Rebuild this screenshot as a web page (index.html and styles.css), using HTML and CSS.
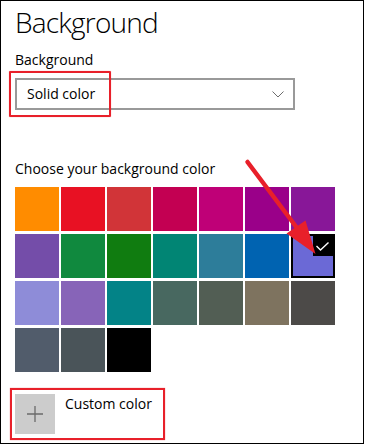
FILE: index.html
```html
<!DOCTYPE html>
<html lang="en">
<head>
  <meta charset="UTF-8" />
  <meta name="viewport" content="width=device-width, initial-scale=1.0" />
  <title>Background</title>
  <link rel="stylesheet" href="styles.css">
</head>
<body>
  <div class="frame">
    <h1 class="title">Background</h1>
    <div class="label">Background</div>
    <div class="select">
      <span>Solid color</span>
      <svg class="chevron" width="12" height="7" viewBox="0 0 12 7">
        <path d="M0.5 0.5 L6 6 L11.5 0.5" fill="none" stroke="#6d6d6d" stroke-width="1" />
      </svg>
    </div>
    <div class="label section">Choose your background color</div>
    <div class="swatches">
      <!-- row 1 -->
      <div class="swatch" style="background:#ff8c00"></div>
      <div class="swatch" style="background:#e81123"></div>
      <div class="swatch" style="background:#d13438"></div>
      <div class="swatch" style="background:#c30052"></div>
      <div class="swatch" style="background:#bf0077"></div>
      <div class="swatch" style="background:#9a0089"></div>
      <div class="swatch" style="background:#881798"></div>
      <!-- row 2 -->
      <div class="swatch" style="background:#744da9"></div>
      <div class="swatch" style="background:#10893e"></div>
      <div class="swatch" style="background:#107c10"></div>
      <div class="swatch" style="background:#018574"></div>
      <div class="swatch" style="background:#2d7d9a"></div>
      <div class="swatch" style="background:#0063b1"></div>
      <div class="swatch selected" style="background:#6b69d6">
        <span class="check">
          <svg width="22" height="22" viewBox="0 0 22 22">
            <path d="M3.5 12 L7.5 16 L15.5 8.5" fill="none" stroke="#fff" stroke-width="1.4" />
          </svg>
        </span>
      </div>
      <!-- row 3 -->
      <div class="swatch" style="background:#8e8cd8"></div>
      <div class="swatch" style="background:#8764b8"></div>
      <div class="swatch" style="background:#038387"></div>
      <div class="swatch" style="background:#486860"></div>
      <div class="swatch" style="background:#525e54"></div>
      <div class="swatch" style="background:#7e735f"></div>
      <div class="swatch" style="background:#4c4a48"></div>
      <!-- row 4 -->
      <div class="swatch" style="background:#515c6b"></div>
      <div class="swatch" style="background:#4a5459"></div>
      <div class="swatch" style="background:#000000"></div>
    </div>
    <div class="custom">
      <div class="plus">
        <svg width="18" height="18" viewBox="0 0 18 18">
          <path d="M9 1 V17 M1 9 H17" stroke="#6a6a6a" stroke-width="1.3" />
        </svg>
      </div>
      <span>Custom color</span>
    </div>

    <!-- annotation overlays -->
    <div class="callout"></div>
    <svg class="arrow" width="366" height="444" viewBox="0 0 366 444">
      <line x1="247.5" y1="162" x2="297" y2="228" stroke="#e8202a" stroke-width="4.5" stroke-linecap="round" />
      <polygon points="286.5,233.5 305.5,220.5 315.5,254" fill="#e8202a" />
    </svg>
  </div>
</body>
</html>
```

FILE: styles.css
```css
body {
  margin: 0;
  background: #fff;
  font-family: "Open Sans", "Noto Sans", sans-serif;
  color: #000;
}

.frame {
  position: relative;
  box-sizing: border-box;
  width: 364px;
  height: 444px;
  border: 1px solid #000;
  padding: 3px 0 0 14px;
  overflow: hidden;
}

.title {
  margin: 0;
  font-size: 28px;
  line-height: 36px;
  font-weight: 300;
  letter-spacing: -0.8px;
}

.label {
  margin-top: 10px;
  font-size: 14px;
  line-height: 20px;
}

.label.section {
  margin-top: 49px;
}

.select {
  box-sizing: border-box;
  display: flex;
  align-items: center;
  justify-content: space-between;
  width: 280px;
  height: 32px;
  margin-top: 8px;
  padding: 0 9px 0 10px;
  border: 2px solid #999;
  font-size: 14px;
  line-height: 28px;
}

.chevron {
  display: block;
  margin-top: 1px;
}

.swatches {
  display: grid;
  grid-template-columns: repeat(7, 44px);
  grid-auto-rows: 44px;
  column-gap: 2px;
  row-gap: 3px;
  margin-top: 8px;
}

.swatch {
  position: relative;
}

.swatch.selected {
  box-sizing: border-box;
  border: 2px solid #000;
}

.check {
  position: absolute;
  top: -2px;
  right: -2px;
  width: 22px;
  height: 22px;
  background: #000;
}

.check svg {
  display: block;
}

.custom {
  box-sizing: border-box;
  display: flex;
  align-items: flex-start;
  gap: 10px;
  width: 155px;
  height: 52px;
  margin: 16px 0 0 -5px;
  padding: 4px 3px 3px 3px;
  border: 2px solid #e8202a;
  box-shadow: 0 0 1px rgba(232, 32, 42, 0.6);
  font-size: 14px;
  line-height: 20px;
}

.plus {
  display: flex;
  align-items: center;
  justify-content: center;
  width: 40px;
  height: 40px;
  background: #ccc;
}

.plus svg {
  display: block;
}

.callout {
  position: absolute;
  left: 8px;
  top: 70px;
  box-sizing: border-box;
  width: 102px;
  height: 46px;
  border: 2px solid #e8202a;
  border-radius: 1px;
  box-shadow: 0 0 1px rgba(232, 32, 42, 0.6);
}

.arrow {
  position: absolute;
  left: -1px;
  top: -1px;
  pointer-events: none;
}
```
